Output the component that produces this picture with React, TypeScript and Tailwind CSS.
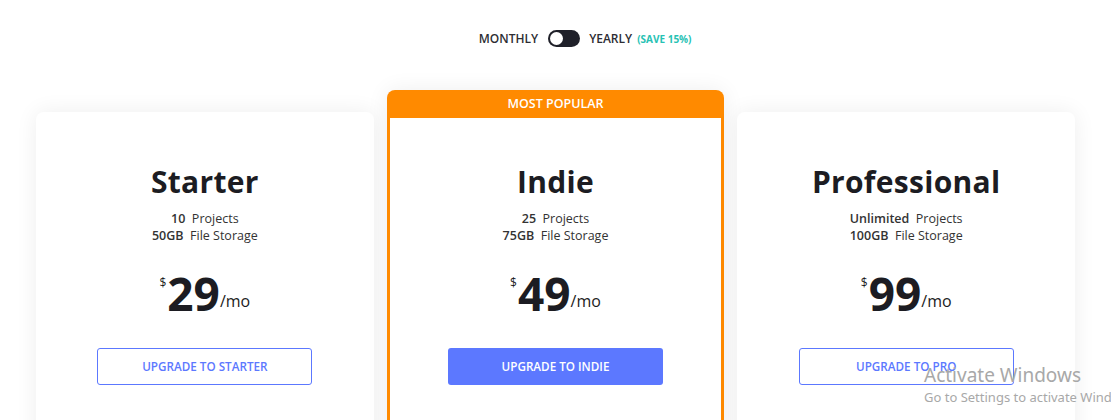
import React from 'react'

const FONT = '"Open Sans", "Liberation Sans", sans-serif'

type Plan = {
    name: string
    projects: string
    storage: string
    price: string
    cta: string
    popular?: boolean
}

const plans: Plan[] = [
    { name: 'Starter', projects: '10', storage: '50GB', price: '29', cta: 'UPGRADE TO STARTER' },
    { name: 'Indie', projects: '25', storage: '75GB', price: '49', cta: 'UPGRADE TO INDIE', popular: true },
    { name: 'Professional', projects: 'Unlimited', storage: '100GB', price: '99', cta: 'UPGRADE TO PRO' },
]

function PlanBody({ plan }: { plan: Plan }) {
    return (
        <div className="flex flex-col items-center text-[#1c1c22]">
            <h2 className="text-[30px] leading-[40px] font-bold tracking-[0.3px]">{plan.name}</h2>
            <div className="mt-2 text-[12.5px] leading-[17px] text-[#333] text-center">
                <p>
                    <span className="font-semibold">{plan.projects}</span>&nbsp; Projects
                </p>
                <p>
                    <span className="font-semibold">{plan.storage}</span>&nbsp; File Storage
                </p>
            </div>
            <div className="mt-[25px] h-[48px] flex items-center">
                <span className="self-start text-[12px] leading-none mt-[8px] mr-[1px]">$</span>
                <span className="text-[46px] leading-[48px] font-bold">{plan.price}</span>
                <span className="self-end text-[16px] leading-none mb-[8px]">/mo</span>
            </div>
            <button
                className={
                    plan.popular
                        ? 'mt-[31px] w-[215px] h-[37px] rounded-[3px] bg-[#5c78ff] text-white text-[11.7px] font-semibold'
                        : 'mt-[31px] w-[215px] h-[37px] rounded-[3px] border border-[#5c78ff] bg-white text-[#5c78ff] text-[11.7px] font-semibold'
                }
            >
                {plan.cta}
            </button>
        </div>
    )
}

export default function App() {
    return (
        <div className="relative w-[1111px] h-[420px] overflow-hidden bg-white" style={{ fontFamily: FONT }}>
            {/* Billing toggle */}
            <div className="pt-[30px] flex items-center justify-center text-[12px] leading-[16px] font-semibold text-[#2d2d33]">
                <span>MONTHLY</span>
                <div className="ml-[10px] mr-[9px] w-[32px] h-[17px] rounded-full bg-[#1f2029] flex items-center px-[2px]">
                    <div className="w-[13px] h-[13px] rounded-full bg-white" />
                </div>
                <span className="relative">
                    YEARLY
                    <span className="absolute left-full top-0 ml-[5px] whitespace-nowrap text-[10px] leading-[16px] font-bold text-[#27c2b4]">
                        (SAVE 15%)
                    </span>
                </span>
            </div>

            {/* Plans */}
            <div className="mt-[43px] flex items-start gap-[13px] px-[36px]">
                {plans.map((p) =>
                    p.popular ? (
                        <div key={p.name} className="w-[338px] rounded-lg bg-[#ff8a00] px-[3px] shadow-[0_0_22px_rgba(0,0,0,0.07)]">
                            <div className="h-[28px] flex items-center justify-center text-[12.5px] font-semibold text-white">
                                MOST POPULAR
                            </div>
                            <div className="bg-white h-[340px] pt-[44px]">
                                <PlanBody plan={p} />
                            </div>
                        </div>
                    ) : (
                        <div
                            key={p.name}
                            className="mt-[22px] w-[338px] h-[360px] rounded-lg bg-white pt-[50px] shadow-[0_0_22px_rgba(0,0,0,0.07)]"
                        >
                            <PlanBody plan={p} />
                        </div>
                    )
                )}
            </div>

            {/* OS watermark */}
            <div
                className="absolute left-[924px] top-[363px] text-[#a8a8a8] whitespace-nowrap"
                style={{ fontFamily: '"Noto Sans", "Open Sans", sans-serif' }}
            >
                <p className="text-[19px] leading-[24px]">Activate Windows</p>
                <p className="text-[13px] leading-[18px] mt-[1px]">Go to Settings to activate Windows.</p>
            </div>
        </div>
    )
}
